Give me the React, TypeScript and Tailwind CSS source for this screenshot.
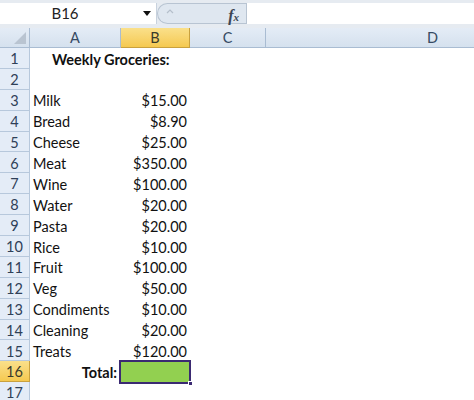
import React from "react";

type Row = { n: number; a?: string; b?: string; aBold?: boolean; aRight?: boolean; title?: boolean; sel?: boolean };

const rows: Row[] = [
  { n: 1, a: "Weekly Groceries:", title: true },
  { n: 2 },
  { n: 3, a: "Milk", b: "$15.00" },
  { n: 4, a: "Bread", b: "$8.90" },
  { n: 5, a: "Cheese", b: "$25.00" },
  { n: 6, a: "Meat", b: "$350.00" },
  { n: 7, a: "Wine", b: "$100.00" },
  { n: 8, a: "Water", b: "$20.00" },
  { n: 9, a: "Pasta", b: "$20.00" },
  { n: 10, a: "Rice", b: "$10.00" },
  { n: 11, a: "Fruit", b: "$100.00" },
  { n: 12, a: "Veg", b: "$50.00" },
  { n: 13, a: "Condiments", b: "$10.00" },
  { n: 14, a: "Cleaning", b: "$20.00" },
  { n: 15, a: "Treats", b: "$120.00" },
  { n: 16, a: "Total:", aBold: true, aRight: true, sel: true },
  { n: 17 },
];

function ColHeader({ label, w, sel }: { label: string; w: string; sel?: boolean }) {
  return (
    <div
      className={
        w +
        " shrink-0 h-full flex items-center justify-center border-r border-b text-[14.5px] " +
        (sel
          ? "bg-gradient-to-b from-[#fae08a] to-[#f5c94f] border-[#c9a13e] text-[#3a3a2a]"
          : "bg-gradient-to-b from-[#e4ecf6] to-[#d5e1ee] border-[#a9bcd2] text-[#364a63]")
      }
    >
      {label}
    </div>
  );
}

export default function App() {
  return (
    <div
      className="w-[474px] h-[400px] overflow-hidden bg-white relative"
      style={{ fontFamily: "Lato, 'Open Sans', sans-serif" }}
    >
      {/* formula bar */}
      <div className="h-[28px] bg-[#e6ebf1] pt-[3px] flex">
        <div className="w-[157px] h-[21px] bg-white flex items-center border-r border-[#c8d2de]">
          <div className="w-[130px] text-center text-[15px] text-[#222]">B16</div>
          <div className="flex-1 flex items-center justify-center pl-[8px]">
            <svg width="8" height="5" viewBox="0 0 8 5">
              <path d="M0 0 L8 0 L4 5 Z" fill="#111" />
            </svg>
          </div>
        </div>
        <div className="w-[89px] h-[21px] bg-[#dfe7f0] rounded-l-full border border-[#b8c4d2] border-r-0 flex items-center relative">
          <svg className="ml-[8px] mb-[5px]" width="8" height="5" viewBox="0 0 8 5">
            <path d="M1 4 L4 1 L7 4" stroke="#b5bfcb" strokeWidth="1.2" fill="none" />
          </svg>
          <span
            className="absolute right-[7px] top-[0px] text-[16px] font-bold italic text-[#3d4553]"
            style={{ fontFamily: "'Liberation Serif', serif" }}
          >
            f<span className="text-[11px]">x</span>
          </span>
        </div>
        <div className="flex-1 h-[21px] bg-white border-l border-[#b8c4d2]" />
      </div>

      {/* column headers */}
      <div className="h-[20px] flex w-[600px]">
        <div className="w-[30px] shrink-0 h-full bg-gradient-to-b from-[#e4ecf6] to-[#d5e1ee] border-r border-b border-[#a9bcd2] relative">
          <svg className="absolute right-[3px] bottom-[3px]" width="12" height="12" viewBox="0 0 12 12">
            <path d="M12 0 L12 12 L0 12 Z" fill="#b9c4d1" />
          </svg>
        </div>
        <ColHeader label="A" w="w-[91px]" />
        <ColHeader label="B" w="w-[69px]" sel />
        <ColHeader label="C" w="w-[76px]" />
        <ColHeader label="D" w="w-[334px]" />
      </div>

      {/* rows */}
      {rows.map((r) => (
        <div key={r.n} className="h-[20.9px] flex text-[14.5px] text-[#111]">
          <div
            className={
              "w-[30px] shrink-0 h-full flex items-center justify-center border-r border-b pt-[2px] text-[14.5px] " +
              (r.sel
                ? "bg-gradient-to-b from-[#fae08a] to-[#f5c94f] border-[#c9a13e] text-[#3a3a2a]"
                : "bg-[#e4ecf7] border-[#b7c8dc] text-[#2f4058]")
            }
          >
            {r.n}
          </div>
          <div
            className={
              "w-[91px] shrink-0 h-full flex items-center pt-[2px] whitespace-nowrap relative z-10 " +
              (r.aRight ? "justify-end pr-[4px] " : "pl-[3px] ") +
              (r.aBold || r.title ? "font-bold " : "") +
              (r.title ? "pl-[22px]" : "")
            }
          >
            {r.a}
          </div>
          <div className="w-[69px] shrink-0 h-full flex items-center justify-end pr-[3px] pt-[2px] relative">
            {r.sel && (
              <div className="absolute -left-[2px] -top-[1px] -right-[1px] -bottom-[2px] bg-[#92d050] border-2 border-[#3b2a72]">
                <div className="absolute -right-[4px] -bottom-[4px] w-[5px] h-[5px] bg-[#3b2a72] border border-white" />
              </div>
            )}
            {r.b}
          </div>
          <div className="w-[76px] shrink-0 h-full" />
          <div className="flex-1 h-full" />
        </div>
      ))}
    </div>
  );
}
